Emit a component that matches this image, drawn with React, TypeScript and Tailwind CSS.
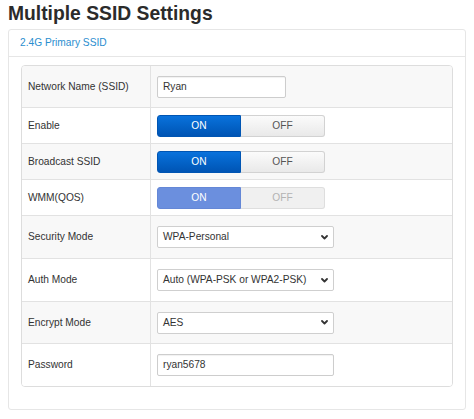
import React from "react";

const Chevron = () => (
  <svg width="7" height="5" viewBox="0 0 7 5" className="shrink-0">
    <path d="M1 1 L3.5 3.5 L6 1" fill="none" stroke="#333" strokeWidth="1.8" strokeLinecap="round" strokeLinejoin="round" />
  </svg>
);

const Toggle = ({ disabled = false }: { disabled?: boolean }) => (
  <div className="flex w-[168px] h-[22px] text-[10.2px]">
    {disabled ? (
      <>
        <div className="w-[84px] h-full flex items-center justify-center rounded-l-[3px] bg-[#6b8fde] text-white border border-[#6487d6]">ON</div>
        <div className="w-[84px] h-full flex items-center justify-center rounded-r-[3px] bg-[#f0f0f0] text-[#b3b3b3] border border-l-0 border-[#dedede]">OFF</div>
      </>
    ) : (
      <>
        <div className="w-[84px] h-full flex items-center justify-center rounded-l-[3px] bg-gradient-to-b from-[#0a72dc] to-[#0054b4] text-white border border-[#0055b3]">ON</div>
        <div className="w-[84px] h-full flex items-center justify-center rounded-r-[3px] bg-gradient-to-b from-[#fbfbfb] to-[#e9e9e9] text-[#555] border border-l-0 border-[#d2d2d2]">OFF</div>
      </>
    )}
  </div>
);

const Select = ({ value }: { value: string }) => (
  <div className="flex items-center justify-between w-[177px] h-[22px] border border-[#cfcfcf] rounded-[2px] bg-white pl-[5px] pr-[5px] text-[10.2px] text-[#333]">
    <span>{value}</span>
    <Chevron />
  </div>
);

const Input = ({ value, w }: { value: string; w: string }) => (
  <div className={`flex items-center h-[22px] border border-[#cdcdcd] rounded-[2px] bg-white pl-[5px] text-[10.2px] text-[#333] shadow-[inset_0_1px_1px_rgba(0,0,0,0.06)] ${w}`}>
    {value}
  </div>
);

type Row = { label: string; h: string; control: React.ReactNode };

export default function App() {
  const rows: Row[] = [
    { label: "Network Name (SSID)", h: "h-[42px]", control: <Input value="Ryan" w="w-[129px]" /> },
    { label: "Enable", h: "h-[36px]", control: <Toggle /> },
    { label: "Broadcast SSID", h: "h-[36px]", control: <Toggle /> },
    { label: "WMM(QOS)", h: "h-[36px]", control: <Toggle disabled /> },
    { label: "Security Mode", h: "h-[43px]", control: <Select value="WPA-Personal" /> },
    { label: "Auth Mode", h: "h-[43px]", control: <Select value="Auto (WPA-PSK or WPA2-PSK)" /> },
    { label: "Encrypt Mode", h: "h-[42px]", control: <Select value="AES" /> },
    { label: "Password", h: "h-[42px]", control: <Input value="ryan5678" w="w-[177px]" /> },
  ];

  return (
    <div className="w-[474px] h-[419px] overflow-hidden bg-white font-['Liberation_Sans',Arial,sans-serif] text-[#333]">
      <h1 className="pl-[8px] pt-[3px] text-[19.3px] leading-[22px] font-bold text-[#2b2b2b] h-[29px]">
        Multiple SSID Settings
      </h1>
      <div className="mx-[8px] border border-[#e6e6e6] rounded-[3px]">
        <div className="h-[27px] flex items-center pl-[11px] border-b border-[#e6e6e6] text-[10.2px] text-[#2a8ecf]">
          2.4G Primary SSID
        </div>
        <div className="pt-[8px] pb-[22px] px-[12px]">
          <div className="border border-[#dddddd] rounded-[4px] overflow-hidden">
            {rows.map((r, i) => (
              <div
                key={r.label}
                className={`flex ${r.h} ${i % 2 === 0 ? "bg-[#f8f8f8]" : "bg-white"} ${i < rows.length - 1 ? "border-b border-[#e2e2e2]" : ""}`}
              >
                <div className="w-[129px] shrink-0 flex items-center pl-[6px] border-r border-[#e2e2e2] text-[10.2px] text-[#333]">
                  {r.label}
                </div>
                <div className="flex items-center pl-[6px]">{r.control}</div>
              </div>
            ))}
          </div>
        </div>
      </div>
    </div>
  );
}
